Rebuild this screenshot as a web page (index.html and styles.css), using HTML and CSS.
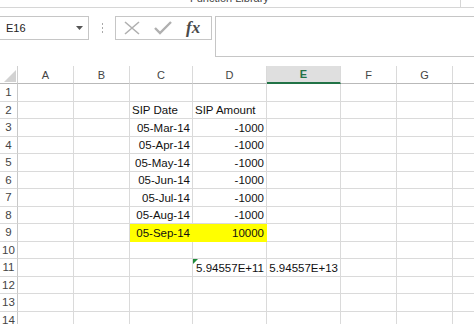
FILE: index.html
```html
<!DOCTYPE html>
<html>
<head>
<meta charset="utf-8">
<link rel="stylesheet" href="styles.css">
</head>
<body>
<div class="ribbon">
  <span class="ribbon-title">Function Library</span>
  <span class="ribbon-tick"></span>
</div>
<div class="fbar">
  <div class="namebox">
    <span class="namebox-text">E16</span>
    <svg class="dd" width="7" height="4" viewBox="0 0 7 4"><path d="M0 0H7L3.5 4Z" fill="#555"/></svg>
  </div>
  <div class="grip"><i></i><i></i><i></i></div>
  <div class="fbtns">
    <svg width="18" height="14" viewBox="0 0 18 14"><path d="M2 1L16 13M16 1L2 13" stroke="#b0b0b0" stroke-width="1.6" fill="none"/></svg>
    <svg width="18" height="14" viewBox="0 0 18 14"><path d="M1 7L6 12L17 1" stroke="#b0b0b0" stroke-width="2.4" fill="none"/></svg>
    <span class="fx">fx</span>
  </div>
  <div class="finput"></div>
</div>
<div class="sheet">
  <div class="ch corner"><span class="tri"></span></div>
  <div class="ch">A</div>
  <div class="ch">B</div>
  <div class="ch">C</div>
  <div class="ch">D</div>
  <div class="ch sel">E</div>
  <div class="ch">F</div>
  <div class="ch">G</div>
  <div class="ch last"></div>

  <div class="rh">1</div><div class="c"></div><div class="c"></div><div class="c"></div><div class="c"></div><div class="c"></div><div class="c"></div><div class="c"></div><div class="c last"></div>
  <div class="rh">2</div><div class="c"></div><div class="c"></div><div class="c l">SIP Date</div><div class="c l">SIP Amount</div><div class="c"></div><div class="c"></div><div class="c"></div><div class="c last"></div>
  <div class="rh">3</div><div class="c"></div><div class="c"></div><div class="c r">05-Mar-14</div><div class="c r">-1000</div><div class="c"></div><div class="c"></div><div class="c"></div><div class="c last"></div>
  <div class="rh">4</div><div class="c"></div><div class="c"></div><div class="c r">05-Apr-14</div><div class="c r">-1000</div><div class="c"></div><div class="c"></div><div class="c"></div><div class="c last"></div>
  <div class="rh">5</div><div class="c"></div><div class="c"></div><div class="c r">05-May-14</div><div class="c r">-1000</div><div class="c"></div><div class="c"></div><div class="c"></div><div class="c last"></div>
  <div class="rh">6</div><div class="c"></div><div class="c"></div><div class="c r">05-Jun-14</div><div class="c r">-1000</div><div class="c"></div><div class="c"></div><div class="c"></div><div class="c last"></div>
  <div class="rh">7</div><div class="c"></div><div class="c"></div><div class="c r">05-Jul-14</div><div class="c r">-1000</div><div class="c"></div><div class="c"></div><div class="c"></div><div class="c last"></div>
  <div class="rh">8</div><div class="c"></div><div class="c"></div><div class="c r">05-Aug-14</div><div class="c r">-1000</div><div class="c"></div><div class="c"></div><div class="c"></div><div class="c last"></div>
  <div class="rh">9</div><div class="c"></div><div class="c"></div><div class="c r hl">05-Sep-14</div><div class="c r hl">10000</div><div class="c"></div><div class="c"></div><div class="c"></div><div class="c last"></div>
  <div class="rh">10</div><div class="c"></div><div class="c"></div><div class="c"></div><div class="c"></div><div class="c"></div><div class="c"></div><div class="c"></div><div class="c last"></div>
  <div class="rh">11</div><div class="c"></div><div class="c"></div><div class="c"></div><div class="c r warn">5.94557E+11</div><div class="c r">5.94557E+13</div><div class="c"></div><div class="c"></div><div class="c last"></div>
  <div class="rh">12</div><div class="c"></div><div class="c"></div><div class="c"></div><div class="c"></div><div class="c"></div><div class="c"></div><div class="c"></div><div class="c last"></div>
  <div class="rh">13</div><div class="c"></div><div class="c"></div><div class="c"></div><div class="c"></div><div class="c"></div><div class="c"></div><div class="c"></div><div class="c last"></div>
  <div class="rh">14</div><div class="c"></div><div class="c"></div><div class="c"></div><div class="c"></div><div class="c"></div><div class="c"></div><div class="c"></div><div class="c last"></div>
</div>
</body>
</html>
```
FILE: styles.css
```css
html, body {
  margin: 0;
  padding: 0;
  background: #fff;
  overflow: hidden;
}
body {
  font-family: "Liberation Sans", Arial, sans-serif;
  font-size: 11px;
  color: #111;
  width: 474px;
  height: 324px;
}
.ribbon {
  height: 8px;
  box-sizing: border-box;
  border-bottom: 1px solid #d6d6d6;
  display: flex;
  overflow: hidden;
  position: relative;
}
.ribbon-title {
  margin-left: 190px;
  margin-top: -8px;
  font-size: 11px;
  line-height: 13px;
  color: #444;
}
.ribbon-tick {
  margin-left: auto;
  margin-right: 13px;
  width: 1px;
  background: #d6d6d6;
}
.fbar {
  margin-top: 8px;
  display: flex;
  align-items: flex-start;
  height: 41px;
}
.namebox {
  margin-left: -1px;
  width: 90px;
  height: 24px;
  box-sizing: border-box;
  border: 1px solid #c6c6c6;
  display: flex;
  align-items: center;
  padding-left: 6px;
  padding-right: 5px;
}
.namebox-text {
  flex: 1;
  font-size: 11px;
  color: #222;
}
.dd {
  display: block;
}
.grip {
  width: 26px;
  height: 24px;
  display: flex;
  flex-direction: column;
  align-items: center;
  justify-content: center;
  gap: 2px;
}
.grip i {
  display: block;
  width: 1px;
  height: 2px;
  background: #a9a9a9;
}
.fbtns {
  width: 97px;
  height: 24px;
  box-sizing: border-box;
  border: 1px solid #c6c6c6;
  display: flex;
  align-items: center;
  padding-left: 7px;
  gap: 13px;
}
.fbtns svg {
  display: block;
}
.fx {
  font-family: "Liberation Serif", "Times New Roman", serif;
  font-style: italic;
  font-weight: bold;
  font-size: 17px;
  color: #4a4a4a;
  line-height: 16px;
  margin-left: 1px;
}
.finput {
  margin-left: 3px;
  flex: 1;
  height: 41px;
  box-sizing: border-box;
  border: 1px solid #c6c6c6;
  border-right: none;
  margin-right: -1px;
}
.sheet {
  margin-top: 9px;
  display: grid;
  grid-template-columns: 18px 56px 56px 63px 74px 74px 56px 56px 1fr;
  grid-template-rows: 18px;
  grid-auto-rows: 17.5px;
}
.ch {
  box-sizing: border-box;
  border-right: 1px solid #dadada;
  border-bottom: 1px solid #b9b9b9;
  color: #444;
  font-size: 11px;
  display: flex;
  align-items: center;
  justify-content: center;
  position: relative;
}
.ch.corner {
  border-right-color: #d0d0d0;
}
.tri {
  position: absolute;
  right: 1px;
  bottom: 1px;
  width: 0;
  height: 0;
  border-left: 12px solid transparent;
  border-bottom: 12px solid #d2d2d2;
}
.ch.sel {
  background: #dfdfdf;
  color: #217346;
  font-weight: bold;
  border-bottom: 2px solid #217346;
}
.ch.last, .c.last {
  border-right: none;
}
.rh {
  box-sizing: border-box;
  border-right: 1px solid #c8c8c8;
  border-bottom: 1px solid #dadada;
  color: #444;
  display: flex;
  align-items: center;
  justify-content: center;
  font-size: 11.5px;
}
.c {
  box-sizing: border-box;
  border-right: 1px solid #dadada;
  border-bottom: 1px solid #dadada;
  display: flex;
  align-items: center;
  padding: 1px 2px 0 2px;
  white-space: nowrap;
  position: relative;
  font-size: 11.5px;
}
.c.r {
  justify-content: flex-end;
}
.c.l {
  justify-content: flex-start;
}
.c.hl {
  background: #ffff00;
  border-color: #ffff00;
}
.c.warn::before {
  content: "";
  position: absolute;
  left: 0;
  top: 0;
  width: 0;
  height: 0;
  border-top: 5px solid #1e8a3a;
  border-right: 5px solid transparent;
}
```
